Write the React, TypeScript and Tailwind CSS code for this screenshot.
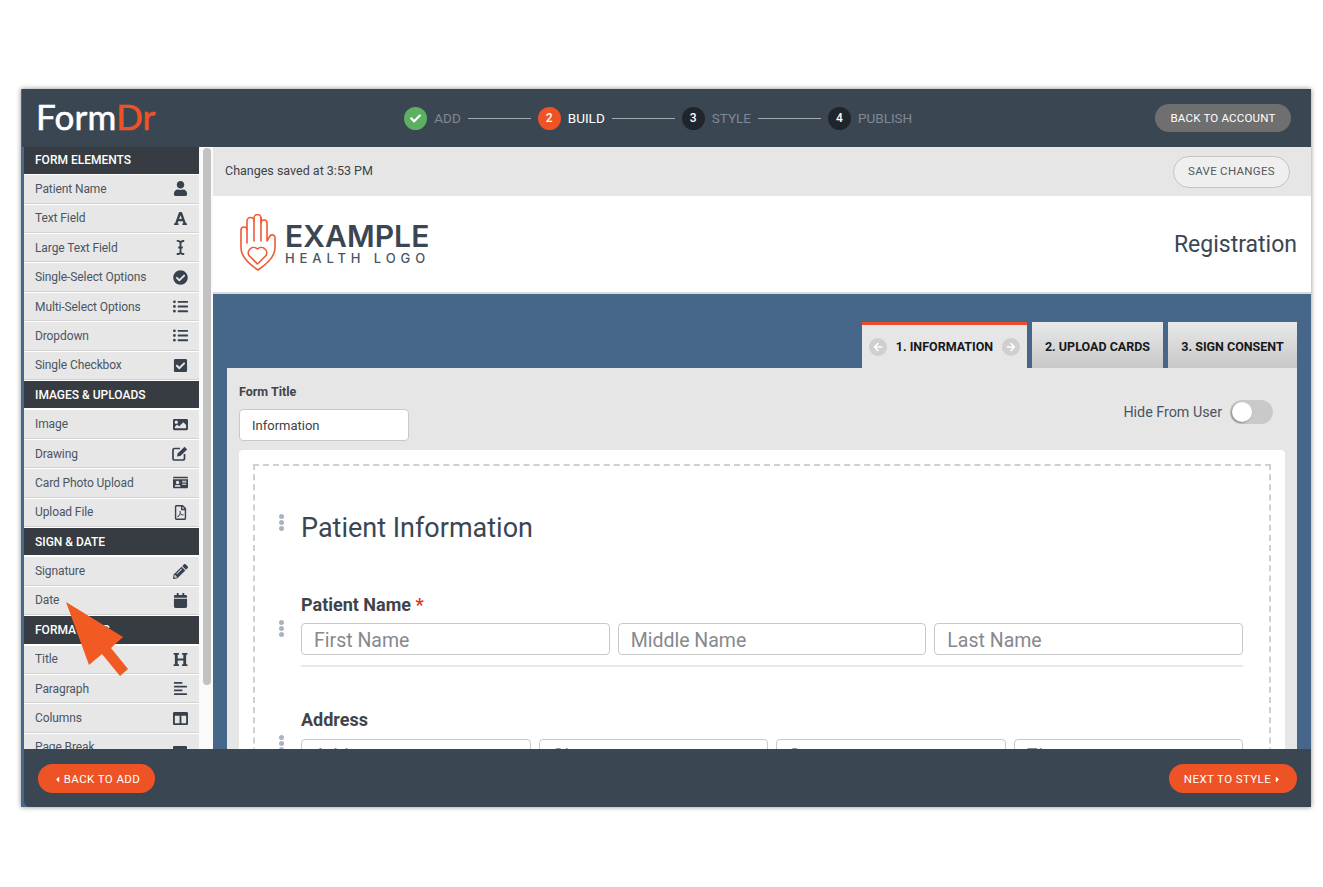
import {
  FaAlignLeft,
  FaArrowLeft,
  FaArrowRight,
  FaCalendar,
  FaCaretLeft,
  FaCaretRight,
  FaCheck,
  FaCheckCircle,
  FaCheckSquare,
  FaColumns,
  FaFont,
  FaHeading,
  FaICursor,
  FaIdCard,
  FaImage,
  FaListUl,
  FaPencilAlt,
  FaRegFilePdf,
  FaUser,
} from "react-icons/fa";

const DrawingIcon = () => (
  <svg width="16" height="15" viewBox="0 0 16 15" fill="none">
    <path d="M8 2.500H2.500a1.500 1.500 0 0 0-1.500 1.500v8.500a1.500 1.500 0 0 0 1.500 1.500H11a1.500 1.500 0 0 0 1.500-1.500V8" stroke="currentColor" strokeWidth="1.7" />
    <path d="M5 10.500l.6-3L12.500.8l2.700 2.700-6.900 6.400Z" fill="currentColor" />
  </svg>
);

const PageBreakIcon = () => (
  <svg width="16" height="15" viewBox="0 0 16 15">
    <rect x="1" y="6" width="14" height="5" rx="1" fill="currentColor" />
  </svg>
);

const sidebar = [
  { head: "FORM ELEMENTS" },
  { label: "Patient Name", icon: <FaUser /> },
  { label: "Text Field", icon: <FaFont /> },
  { label: "Large Text Field", icon: <FaICursor /> },
  { label: "Single-Select Options", icon: <FaCheckCircle /> },
  { label: "Multi-Select Options", icon: <FaListUl /> },
  { label: "Dropdown", icon: <FaListUl /> },
  { label: "Single Checkbox", icon: <FaCheckSquare /> },
  { head: "IMAGES & UPLOADS" },
  { label: "Image", icon: <FaImage /> },
  { label: "Drawing", icon: <DrawingIcon /> },
  { label: "Card Photo Upload", icon: <FaIdCard /> },
  { label: "Upload File", icon: <FaRegFilePdf /> },
  { head: "SIGN & DATE" },
  { label: "Signature", icon: <FaPencilAlt /> },
  { label: "Date", icon: <FaCalendar /> },
  { head: "FORMATTING" },
  { label: "Title", icon: <FaHeading /> },
  { label: "Paragraph", icon: <FaAlignLeft /> },
  { label: "Columns", icon: <FaColumns /> },
  { label: "Page Break", icon: <PageBreakIcon /> },
];

const Dots = ({ className }: { className: string }) => (
  <div className={`flex w-[5px] shrink-0 flex-col gap-[1px] ${className}`}>
    <span className="h-[5px] w-[5px] rounded-full bg-[#a9b4c2]" />
    <span className="h-[5px] w-[5px] rounded-full bg-[#a9b4c2]" />
    <span className="h-[5px] w-[5px] rounded-full bg-[#a9b4c2]" />
  </div>
);

const Field = ({ text }: { text: string }) => (
  <div className="flex h-[32px] flex-1 items-center rounded-[4px] border border-[#c9c9c9] pl-[12px] pt-[3px] text-[19.5px] text-[#85898e]">
    {text}
  </div>
);

const Step = ({ mark, label, circle, text }: { mark: React.ReactNode; label: string; circle: string; text: string }) => (
  <div className="flex items-center gap-[7px]">
    <span className={`flex h-[23px] w-[23px] items-center justify-center rounded-full text-[12px] font-medium text-white ${circle}`}>
      {mark}
    </span>
    <span className={`text-[13.500px] ${text}`}>{label}</span>
  </div>
);

const HandLogo = () => (
  <svg width="36" height="58" viewBox="0 0 36 58" fill="none" stroke="#ee5a36" strokeWidth="1.6" strokeLinejoin="round" strokeLinecap="round">
    <path d="M18 56C12 52 1 44 1 34V16a3 3 0 0 1 6 0V7a3.2 3.2 0 0 1 7 0V4a3.4 3.4 0 0 1 7 0V9a3 3 0 0 1 6 0V27l3-5a2.8 2.8 0 0 1 5 2V34C35 44 24 52 18 56Z" />
    <path d="M7 16V29M14 7V27M21 4V27" />
    <path d="M17.500 50L9 41.500a5.400 5.400 0 0 1 8.500-6.500a5.400 5.400 0 0 1 8.500 6.500Z" />
  </svg>
);

const App = () => {
  return (
    <div className="relative h-[887px] w-[1323px] overflow-hidden bg-white pl-[21px] pt-[89px] font-['Roboto',sans-serif]">
      <div className="flex h-[718px] w-[1290px] flex-col overflow-hidden bg-[#46688a] pl-[3px] shadow-[0_0_5px_rgba(0,0,0,0.45)]">
        {/* top bar */}
        <header className="-ml-[2px] flex h-[58px] shrink-0 items-center justify-between bg-[#3b4653] pl-[14px] pr-[20px]">
          <div className="-mt-[3px] font-['Lato',sans-serif] text-[35px] leading-none tracking-[0.2px] [-webkit-text-stroke:0.6px]">
            <span className="text-white">Form</span>
            <span className="text-[#ee5326]">Dr</span>
          </div>
          <div className="ml-[6px] flex items-center gap-[7px]">
            <Step mark={<FaCheck className="text-[11px]" />} label="ADD" circle="bg-[#5cb062]" text="text-[#7f8894]" />
            <span className="h-[1px] w-[63px] bg-[#a4a9af]" />
            <Step mark="2" label="BUILD" circle="bg-[#ee5326]" text="text-white" />
            <span className="h-[1px] w-[63px] bg-[#a4a9af]" />
            <Step mark="3" label="STYLE" circle="bg-[#20252c]" text="text-[#7f8894]" />
            <span className="h-[1px] w-[63px] bg-[#a4a9af]" />
            <Step mark="4" label="PUBLISH" circle="bg-[#20252c]" text="text-[#7f8894]" />
          </div>
          <button className="h-[28px] w-[136px] rounded-full bg-[#6f6f6f] pt-[1px] text-[11.500px] tracking-[0.2px] text-white">BACK TO ACCOUNT</button>
        </header>

        <div className="flex min-h-0 flex-1">
          {/* sidebar */}
          <aside className="w-[175px] shrink-0 overflow-hidden bg-white">
            {sidebar.map((item, i) =>
              item.head ? (
                <div key={item.head} className={`flex items-center ${i === 0 ? "h-[27.300px]" : "h-[29.400px] py-[1px]"}`}>
                  <div className={`flex h-full w-full items-center bg-[#363c42] pl-[11px] text-[12px] font-medium text-white ${i === 0 ? "pb-[2px]" : ""}`}>{item.head}</div>
                </div>
              ) : (
                <div key={item.label} className="flex h-[29.400px] items-center justify-between border-y border-b-[#d2d2d2] border-t-white bg-[#e7e7e7] pl-[11px] pr-[11px] text-[12px] tracking-[-0.1px] text-[#4a5563]">
                  <span>{item.label}</span>
                  <span className="flex w-[16px] justify-center text-[15px] text-[#38424f]">{item.icon}</span>
                </div>
              )
            )}
          </aside>
          <div className="w-[14px] shrink-0 bg-[#fafafa] pl-[4px] pt-[1px]">
            <div className="h-[537px] w-[8px] rounded-full bg-[#c2c2c2]" />
          </div>

          {/* main */}
          <main className="flex min-w-0 flex-1 flex-col overflow-hidden">
            <div className="flex h-[49px] shrink-0 items-center justify-between bg-[#e6e6e6] pl-[12px] pr-[21px]">
              <span className="text-[12.500px] text-[#3d4248]">Changes saved at 3:53 PM</span>
              <button className="h-[32px] w-[117px] rounded-full border border-[#c4c4c4] bg-[#efefef] text-[11.500px] tracking-[0.3px] text-[#55595e]">SAVE CHANGES</button>
            </div>
            <div className="flex h-[98px] shrink-0 items-center justify-between border-b-2 border-[#dadada] bg-white pl-[27px] pr-[14px]">
              <div className="flex items-center gap-[9px] pb-[2px]">
                <HandLogo />
                <div className="font-['Inter',sans-serif] text-[#3b4653]">
                  <div className="text-[30px] font-semibold leading-[30px] tracking-[0.1px]">EXAMPLE</div>
                  <div className="text-[13px] font-medium leading-[14px] tracking-[4.900px] text-[#4a5563]">HEALTH LOGO</div>
                </div>
              </div>
              <span className="pt-[2px] text-[23px] text-[#3b4653]">Registration</span>
            </div>

            <div className="min-h-0 flex-1 bg-[#46678a] px-[14px] pt-[28px]">
              <div className="flex h-[46px] justify-end gap-[5px] text-[12.500px] font-bold text-[#16181b]">
                <div className="flex w-[165px] items-center justify-between border-t-[3px] border-[#ee4d2d] bg-[#e6e6e6] px-[7px]">
                  <span className="flex h-[18px] w-[18px] items-center justify-center rounded-full bg-[#cfcfcf] text-[10px] text-white"><FaArrowLeft /></span>
                  <span className="pt-[2px]">1. INFORMATION</span>
                  <span className="flex h-[18px] w-[18px] items-center justify-center rounded-full bg-[#cfcfcf] text-[10px] text-white"><FaArrowRight /></span>
                </div>
                <div className="flex w-[131px] items-center justify-center bg-gradient-to-b from-[#e9e9e9] to-[#c8c8c8] pt-[5px]">2. UPLOAD CARDS</div>
                <div className="flex w-[129px] items-center justify-center bg-gradient-to-b from-[#e9e9e9] to-[#c8c8c8] pt-[5px]">3. SIGN CONSENT</div>
              </div>

              <div className="h-[400px] bg-[#e6e6e6] px-[12px]">
                <div className="flex h-[82px] items-start justify-between pr-[12px]">
                  <div className="pt-[16px]">
                    <div className="h-[16px] text-[12.500px] font-bold leading-[16px] text-[#3f444a]">Form Title</div>
                    <div className="mt-[9px] flex h-[32px] w-[170px] items-center rounded-[4px] border border-[#c9c9c9] bg-white pl-[12px] pt-[2px] text-[13px] text-[#3d4248]">Information</div>
                  </div>
                  <div className="flex items-center gap-[8px] pt-[32px]">
                    <span className="pt-[1px] text-[14.300px] text-[#4a5563]">Hide From User</span>
                    <span className="flex h-[24px] w-[43px] items-center rounded-full bg-[#c9c9c9] pl-[2px]">
                      <span className="h-[20px] w-[20px] rounded-full bg-white shadow-[-1px_1px_2px_rgba(0,0,0,0.35)]" />
                    </span>
                  </div>
                </div>

                <div className="h-[318px] rounded-t-[4px] bg-white px-[14px] pt-[14px]">
                  <div className="h-[320px] border-x-2 border-t-2 border-dashed border-[#d0d0d0] pl-[24px] pr-[26px] pt-[41px]">
                    <div className="flex gap-[17px]">
                      <Dots className="mt-[7px]" />
                      <div className="h-[40px] pt-[1px] text-[27px] leading-[40px] text-[#3b4653]">Patient Information</div>
                    </div>
                    <div className="mt-[46px] flex gap-[17px]">
                      <Dots className="mt-[27px]" />
                      <div className="flex-1">
                        <div className="h-[22px] pt-[1px] text-[18px] font-bold leading-[22px] text-[#3f444a]">
                          Patient Name <span className="text-[#e0391f]">*</span>
                        </div>
                        <div className="mt-[8px] flex gap-[8px]">
                          <Field text="First Name" />
                          <Field text="Middle Name" />
                          <Field text="Last Name" />
                        </div>
                        <div className="mt-[10px] h-[2px] bg-[#e8e8e8]" />
                      </div>
                    </div>
                    <div className="mt-[41px] flex gap-[17px]">
                      <Dots className="mt-[27px]" />
                      <div className="flex-1">
                        <div className="h-[22px] pt-[1px] text-[18px] font-bold leading-[22px] text-[#3f444a]">Address</div>
                        <div className="mt-[9px] flex gap-[8px]">
                          <Field text="Address" />
                          <Field text="City" />
                          <Field text="State" />
                          <Field text="Zip" />
                        </div>
                      </div>
                    </div>
                  </div>
                </div>
              </div>
            </div>
          </main>
        </div>

        <footer className="z-10 flex h-[58px] shrink-0 items-center justify-between rounded-bl-[6px] bg-[#3b4653] pl-[14px] pr-[14px]">
          <button className="flex h-[29px] w-[117px] items-center justify-center gap-[2px] rounded-full bg-[#ee5326] pt-[3px] text-[11.500px] tracking-[0.4px] text-white">
            <FaCaretLeft className="text-[9px]" />
            BACK TO ADD
          </button>
          <button className="flex h-[29px] w-[128px] items-center justify-center gap-[2px] rounded-full bg-[#ee5326] pt-[3px] text-[11.500px] tracking-[0.4px] text-white">
            NEXT TO STYLE
            <FaCaretRight className="text-[9px]" />
          </button>
        </footer>
      </div>

      {/* callout arrow over the sidebar */}
      <svg className="absolute left-[60px] top-[596px]" width="75" height="85" viewBox="60 596 75 85">
        <polygon points="66,602 123,637 111,648 128,669 120,676 102,654 89,665" fill="#f25a24" />
      </svg>
    </div>
  );
};

export default App;
